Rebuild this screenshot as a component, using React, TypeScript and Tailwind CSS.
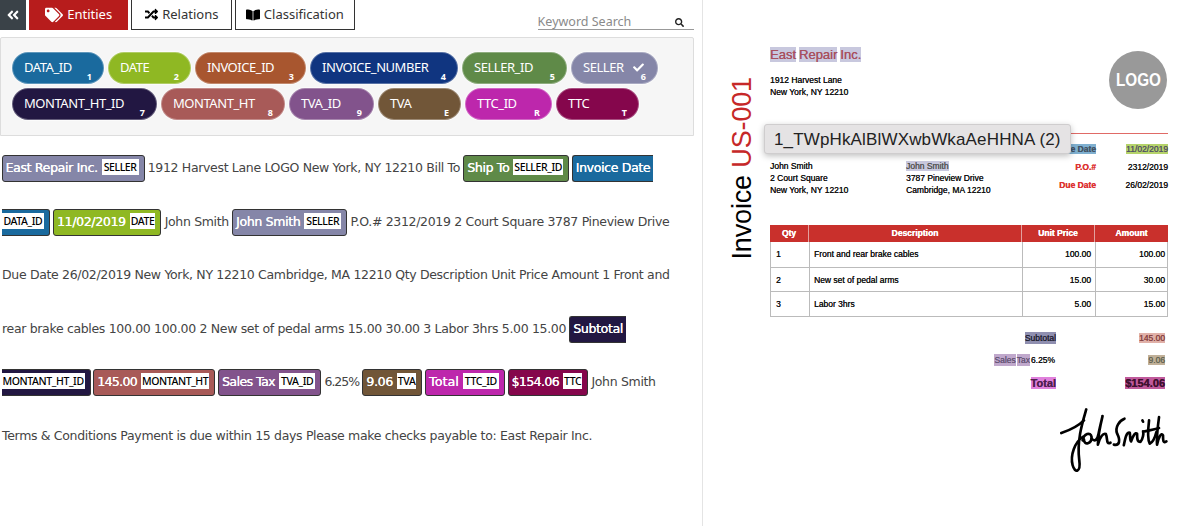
import React from "react";
import { FaAngleDoubleLeft, FaTags, FaRandom, FaBookOpen, FaSearch, FaCheck } from "react-icons/fa";

function Chip({ w, label, k, cls, check }: { w: string; label: string; k: string; cls: string; check?: boolean }) {
  return (
    <div className={`relative h-[32px] rounded-full border border-white/30 pl-[11px] pt-[4px] text-[13px] leading-[20px] tracking-[-0.45px] text-white shadow-[0_0_0_1px_rgba(255,255,255,0.5)] ${w} ${cls}`}>
      <span className="inline-flex items-center gap-[9px]">
        {label}
        {check && <FaCheck className="text-[11px]" />}
      </span>
      <span className="absolute bottom-[0px] right-[11px] text-[9px] font-bold leading-[12px] tracking-normal">{k}</span>
    </div>
  );
}

function Ent({ text, tag, cls, open, wide }: { text?: string; tag?: string; cls: string; open?: "r" | "l"; wide?: boolean }) {
  const edge = open === "r" ? "rounded-l-[3px] border-r-0 pl-[3px] pr-[3px]" : open === "l" ? "rounded-r-[3px] border-l-0 pl-0 pr-[5px]" : "rounded-[3px] pl-[3px] pr-[5px]";
  return (
    <span className={`mx-[-0.5px] inline-block h-[27px] border border-[#333] align-middle leading-[24px] text-white [text-shadow:0.2px_0_0_#fff] ${edge} ${cls}`}>
      {text}
      {tag && <span className={`inline-block h-[16px] bg-white align-[1px] font-['Noto_Sans',sans-serif] text-[10.5px] font-medium leading-[16px] tracking-[-0.4px] text-black [text-shadow:none] ${wide ? "px-[2px]" : "px-[1px]"} ${text ? "ml-[4px]" : ""}`}>{tag}</span>}
    </span>
  );
}

function Hl({ c, children }: { c: string; children: React.ReactNode }) {
  return <span className={c}>{children}</span>;
}

export default function App() {
  const cols = "grid grid-cols-[39px_213px_73px_73px]";
  return (
    <div className="flex h-[526px] w-[1200px] overflow-hidden bg-white font-['Noto_Sans',sans-serif]">
      <div className="flex h-full w-[703px] shrink-0 flex-col border-r-[1px] border-[#e4e4e4] pr-[8px]">
        <div className="flex h-[37px] shrink-0">
          <div className="flex h-[30px] w-[26px] items-center justify-center bg-[#3a4248] text-[14px] text-white"><FaAngleDoubleLeft /></div>
          <div className="ml-[3px] flex h-[30px] w-[100px] items-center justify-center gap-[4px] bg-[#b71c1c] text-[13px] text-white"><FaTags className="text-[18px]" />Entities</div>
          <div className="ml-[3px] flex h-[30px] w-[101px] items-center justify-center gap-[4px] border border-[#333] border-t-0 text-[13px] text-[#333]"><FaRandom className="text-[13px] text-black" />Relations</div>
          <div className="ml-[3px] flex h-[30px] w-[120px] items-center justify-center gap-[4px] border border-[#333] border-t-0 text-[13px] text-[#333]"><FaBookOpen className="text-[14px] text-black" />Classification</div>
          <div className="ml-[183px] mt-[15px] flex h-[15px] w-[157px] items-center justify-between border-b border-[#999] pr-[10px] text-[12.5px] text-[#8a8a8a]">
            Keyword Search
            <FaSearch className="text-[9px] text-[#222]" />
          </div>
        </div>
        <div className="flex h-[99px] shrink-0 flex-col gap-[4px] rounded-t-[2px] border border-[#ddd] bg-[#f6f6f6] pl-[11px] pt-[14px]">
          <div className="flex gap-[4px]">
            <Chip w="w-[92px]" label="DATA_ID" k="1" cls="bg-[#1a6a9e]" />
            <Chip w="w-[83px]" label="DATE" k="2" cls="bg-[#8fb823]" />
            <Chip w="w-[111px]" label="INVOICE_ID" k="3" cls="bg-[#a8562f]" />
            <Chip w="w-[148px]" label="INVOICE_NUMBER" k="4" cls="bg-[#103580]" />
            <Chip w="w-[105px]" label="SELLER_ID" k="5" cls="bg-[#5f8a48]" />
            <Chip w="w-[87px]" label="SELLER" k="6" cls="bg-[#8586a8]" check />
          </div>
          <div className="flex gap-[4px]">
            <Chip w="w-[145px]" label="MONTANT_HT_ID" k="7" cls="bg-[#221742]" />
            <Chip w="w-[124px]" label="MONTANT_HT" k="8" cls="bg-[#a85a58]" />
            <Chip w="w-[85px]" label="TVA_ID" k="9" cls="bg-[#82538c]" />
            <Chip w="w-[83px]" label="TVA" k="E" cls="bg-[#715638]" />
            <Chip w="w-[87px]" label="TTC_ID" k="R" cls="bg-[#bd27ac]" />
            <Chip w="w-[83px]" label="TTC" k="T" cls="bg-[#85064c]" />
          </div>
        </div>
        <div className="whitespace-nowrap pl-[2px] pt-[5px] font-['DejaVu_Sans',sans-serif] text-[12.5px] leading-[53.6px] tracking-[-0.33px] text-[#444]">
          <Ent text="East Repair Inc." tag="SELLER" wide cls="bg-[#8586a8]" /> 1912 Harvest Lane LOGO New York, NY 12210 Bill To <Ent text="Ship To" tag="SELLER_ID" cls="bg-[#5f8a48]" /> <Ent text="Invoice Date" cls="bg-[#1a6a9e]" open="r" /><br />
          <Ent tag="DATA_ID" wide cls="bg-[#1a6a9e]" open="l" /> <Ent text="11/02/2019" tag="DATE" cls="bg-[#8fb823]" /> John Smith <Ent text="John Smith" tag="SELLER" wide cls="bg-[#8586a8]" /> P.O.# 2312/2019 2 Court Square 3787 Pineview Drive<br />
          Due Date 26/02/2019 New York, NY 12210 Cambridge, MA 12210 Qty Description Unit Price Amount 1 Front and<br />
          rear brake cables 100.00 100.00 2 New set of pedal arms 15.00 30.00 3 Labor 3hrs 5.00 15.00 <Ent text="Subtotal" cls="bg-[#221742]" open="r" /><br />
          <Ent tag="MONTANT_HT_ID" cls="bg-[#221742]" open="l" /> <Ent text="145.00" tag="MONTANT_HT" cls="bg-[#a85a58] tracking-[-0.7px]" /> <Ent text="Sales Tax" tag="TVA_ID" wide cls="bg-[#82538c] tracking-[-0.55px]" /> <span className="tracking-[-1px]">6.25%</span> <Ent text="9.06" tag="TVA" cls="bg-[#715638]" /> <Ent text="Total" tag="TTC_ID" wide cls="bg-[#bd27ac] tracking-[0.1px]" /> <Ent text="$154.06" tag="TTC" cls="bg-[#85064c] tracking-[-0.6px]" /> John Smith<br />
          Terms &amp; Conditions Payment is due within 15 days Please make checks payable to: East Repair Inc.
        </div>
      </div>

      <div className="relative flex min-w-0 flex-1 pl-[27px] font-['Liberation_Sans',sans-serif] text-[8.5px] leading-[12px] text-[#111] [text-shadow:0.15px_0_0_currentColor]">
        <div className="w-[24px] shrink-0 pt-[77px]">
          <div className="rotate-180 whitespace-nowrap text-[27px] leading-[24px] tracking-[-0.15px] text-black [text-shadow:none] [writing-mode:vertical-rl]">
            Invoice <span className="text-[#c62828]">US-001</span>
          </div>
        </div>
        <div className="ml-[16px] w-[398px] shrink-0 pt-[47px]">
          <div className="flex justify-between">
            <div>
              <div className="flex gap-[3px] text-[13px] leading-[15px] text-[#a8505f]">
                <Hl c="bg-[#c8c8de]">East</Hl><Hl c="bg-[#c8c8de]">Repair</Hl><Hl c="bg-[#c8c8de]">Inc.</Hl>
              </div>
              <div className="mt-[12px]">1912 Harvest Lane<br />New York, NY 12210</div>
            </div>
            <div className="mr-[1px] mt-[4px] flex h-[58px] w-[58px] items-center justify-center rounded-full bg-[#999] text-[18px] font-bold text-white [text-shadow:none]"><span className="inline-block scale-x-[0.85]">LOGO</span></div>
          </div>
          <div className="mt-[24px] h-px bg-[#e06a66]" />
          <div className="flex pt-[8px]">
            <div className="w-[136px] pt-[18px]">John Smith<br />2 Court Square<br />New York, NY 12210</div>
            <div className="w-[129px] pt-[18px]"><Hl c="bg-[#c8c8de] text-[#555]">John Smith</Hl><br />3787 Pineview Drive<br />Cambridge, MA 12210</div>
            <div className="w-[61px] pt-[1px] text-right font-bold text-[#d33]">
              <div className="h-[18px]"><Hl c="bg-[#7fb0d0] text-[#456]">Invoice Date</Hl></div>
              <div className="h-[18px]">P.O.#</div>
              <div>Due Date</div>
            </div>
            <div className="w-[72px] pt-[1px] text-right">
              <div className="h-[18px]"><Hl c="bg-[#b5d36a] text-[#556]">11/02/2019</Hl></div>
              <div className="h-[18px]">2312/2019</div>
              <div>26/02/2019</div>
            </div>
          </div>
          <div className="mt-[29px] border-b border-[#bbb]">
            <div className={`${cols} h-[17px] bg-[#c9302c] text-center font-bold leading-[17px] text-white`}>
              <div className="border-r border-[#e2a09e]">Qty</div>
              <div className="border-r border-[#e2a09e]">Description</div>
              <div className="border-r border-[#e2a09e]">Unit Price</div>
              <div>Amount</div>
            </div>
            {[["1", "Front and rear brake cables", "100.00", "100.00"], ["2", "New set of pedal arms", "15.00", "30.00"], ["3", "Labor 3hrs", "5.00", "15.00"]].map((r, i) => (
              <div key={r[0]} className={`${cols} h-[24.6px] border-x border-[#bbb] leading-[25px] ${i ? "border-t" : ""}`}>
                <div className="border-r border-[#bbb] pl-[5px]">{r[0]}</div>
                <div className="border-r border-[#bbb] pl-[4px]">{r[1]}</div>
                <div className="border-r border-[#bbb] pr-[4px] text-right">{r[2]}</div>
                <div className="pr-[4px] text-right">{r[3]}</div>
              </div>
            ))}
          </div>
          <div className="mt-[15px] flex flex-col gap-[10px] pr-[3px]">
            <div className="flex h-[12px] justify-end"><Hl c="bg-[#8f8fb0] text-[#223]">Subtotal</Hl><div className="w-[109px] text-right"><Hl c="bg-[#e0b0a8] text-[#844]">145.00</Hl></div></div>
            <div className="flex h-[12px] justify-end"><span className="flex gap-[1px]"><Hl c="bg-[#c0a8cc] text-[#657]">Sales</Hl><Hl c="bg-[#c0a8cc] text-[#657]">Tax</Hl> 6.25%</span><div className="w-[110px] text-right"><Hl c="bg-[#c0b098] text-[#665]">9.06</Hl></div></div>
            <div className="mt-[1px] flex h-[12px] justify-end text-[11px] font-bold"><Hl c="bg-[#e080dc] text-[#502050]">Total</Hl><div className="w-[109px] text-right"><Hl c="bg-[#c05a9c] text-[#401030]">$154.06</Hl></div></div>
          </div>
          <div className="mt-[18px] flex justify-end">
            <svg width="108" height="66" viewBox="300 245 325 198" fill="none" stroke="#000" strokeWidth="8" strokeLinecap="round" strokeLinejoin="round">
              <path d="M304 323 C325 316 352 305 372 285" />
              <path d="M379 252 C368 290 350 345 358 405 C363 442 345 445 338 420 C330 390 345 350 368 335" />
              <path d="M368 345 C372 325 392 318 395 335 C396 355 372 362 372 342" />
              <path d="M395 340 C405 350 412 345 416 325 C420 305 425 285 428 272 C420 305 414 335 414 358 C420 335 430 322 438 326 C444 340 438 358 452 352" />
              <path d="M462 358 C480 362 482 345 472 325 C464 305 480 285 494 280" />
              <path d="M492 360 C497 335 500 320 510 322 C512 335 510 345 514 348 C520 330 527 320 532 325 C532 340 532 350 542 350 C550 340 552 325 550 318" />
              <path d="M548 285 L550 289" />
              <path d="M568 285 C565 310 562 340 570 355 C578 352 585 340 590 320" />
              <path d="M555 318 C570 315 585 312 598 308" />
              <path d="M598 275 C594 305 590 335 592 358 C597 335 605 320 610 330 C610 345 610 355 620 348" />
            </svg>
          </div>
        </div>
        <div className="absolute left-[61px] top-[124px] flex h-[30px] w-[307px] items-center rounded-[3px] border border-[#cfcdce] bg-[#e5e3e4] pl-[9px] pt-[1px] font-['Liberation_Sans',sans-serif] text-[17px] tracking-[0.15px] text-[#222] shadow-[0_2px_6px_rgba(0,0,0,0.25)] [text-shadow:none]">
          1_TWpHkAlBlWXwbWkaAeHHNA (2)
        </div>
      </div>
    </div>
  );
}
